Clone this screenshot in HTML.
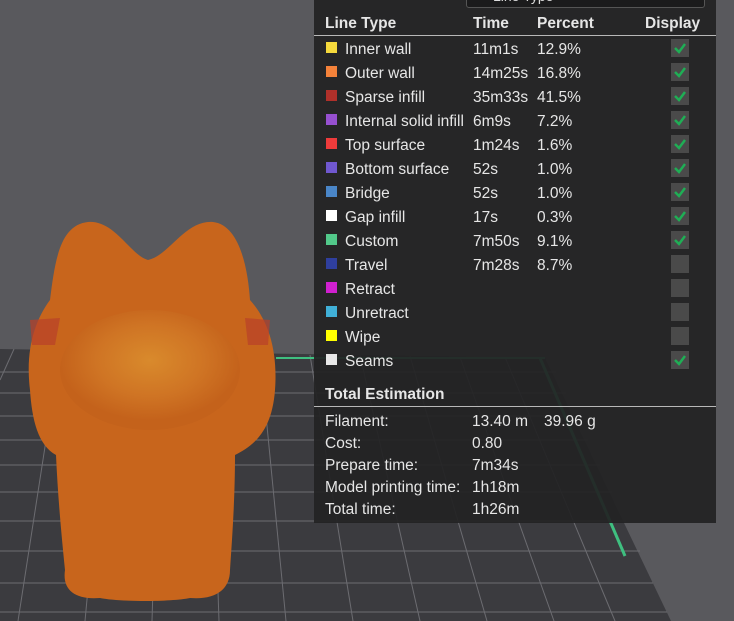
<!DOCTYPE html>
<html><head><meta charset="utf-8"><style>
*{margin:0;padding:0;box-sizing:border-box}
body{width:734px;height:621px;overflow:hidden;background:#59595d;position:relative;font-family:"Liberation Sans",sans-serif}
svg.bg{position:absolute;left:0;top:0}
.panel{position:absolute;left:314px;top:0;width:402px;height:523px;background:rgba(34,34,36,0.93);color:#e6e6e6;font-size:15.5px}
.dd{position:absolute;left:152px;top:-12px;width:239px;height:20px;border:1px solid #555;border-radius:3px;background:#1b1b1c;color:#ddd;font-size:14px;padding-left:26px;line-height:14px}
.t{position:absolute;white-space:nowrap;margin-top:2px}
.b{font-weight:bold}
.hl{position:absolute;left:0;width:402px;height:1px;background:#b8b8b8}
.sw{position:absolute;width:11px;height:11px}
.cb{position:absolute;left:357px;width:18px;height:18px;background:#4a4a4a}
.cb svg{position:absolute;left:2px;top:3px}
</style></head><body>
<svg class="bg" width="734" height="621">
<polygon points="0,349 545,358 671,621 0,621" fill="#3b3b3f"/>
<g stroke="#6c6c71" stroke-width="1" fill="none">
<line x1="0" y1="372" x2="556" y2="372"/>
<line x1="0" y1="393" x2="566" y2="393"/>
<line x1="0" y1="416" x2="577" y2="416"/>
<line x1="0" y1="440" x2="588" y2="440"/>
<line x1="0" y1="465" x2="600" y2="465"/>
<line x1="0" y1="492" x2="612" y2="492"/>
<line x1="0" y1="521" x2="626" y2="521"/>
<line x1="0" y1="551" x2="640" y2="551"/>
<line x1="0" y1="583" x2="653" y2="583"/>
<line x1="0" y1="612" x2="667" y2="612"/>
<line x1="14" y1="349" x2="0" y2="380"/>
<line x1="60" y1="350" x2="18" y2="621"/>
<line x1="110" y1="351" x2="85" y2="621"/>
<line x1="160" y1="352" x2="152" y2="621"/>
<line x1="210" y1="353" x2="219" y2="621"/>
<line x1="260" y1="354" x2="286" y2="621"/>
<line x1="310" y1="355" x2="353" y2="621"/>
<line x1="360" y1="355" x2="420" y2="621"/>
<line x1="410" y1="356" x2="487" y2="621"/>
<line x1="460" y1="357" x2="554" y2="621"/>
<line x1="505" y1="357" x2="615" y2="621"/>
</g>
<line x1="276" y1="358" x2="545" y2="358" stroke="#3fbf80" stroke-width="2"/>
<line x1="540" y1="358" x2="625" y2="556" stroke="#3fbf80" stroke-width="3"/>
<defs><radialGradient id="f" cx="0.5" cy="0.42" r="0.5"><stop offset="0" stop-color="#d98a2c"/><stop offset="0.6" stop-color="#cf7424"/><stop offset="1" stop-color="#c4621b"/></radialGradient></defs>
<path d="M30 390 C25 350 35 320 50 300 C55 260 60 225 88 222 C115 220 130 255 148 260 C170 255 185 220 213 222 C240 225 248 270 250 300 C268 320 278 350 275 390 C272 430 255 445 235 455 C235 500 232 540 230 570 C230 590 215 600 190 598 C170 602 120 602 100 598 C75 600 62 590 65 570 C62 540 58 500 56 455 C38 445 32 420 30 390 Z" fill="#c8651c"/>
<ellipse cx="150" cy="370" rx="90" ry="60" fill="url(#f)"/>
<path d="M30 320 L60 318 L55 345 L32 345 Z" fill="#b8402a" opacity="0.7"/>
<path d="M245 318 L270 320 L268 345 L248 345 Z" fill="#b8402a" opacity="0.7"/>
</svg>
<div class="panel">
<div class="dd">Line Type</div>
<div class="t b" style="left:11px;top:13px">Line Type</div>
<div class="t b" style="left:159px;top:13px">Time</div>
<div class="t b" style="left:223px;top:13px">Percent</div>
<div class="t b" style="left:331px;top:13px">Display</div>
<div class="hl" style="top:35px"></div>

<div class="sw" style="left:12px;top:42px;background:#f5d93c"></div><div class="t" style="left:31px;top:39px">Inner wall</div><div class="t" style="left:159px;top:39px">11m1s</div><div class="t" style="left:223px;top:39px">12.9%</div><div class="cb" style="top:39px"><svg width="14" height="12"><path d="M2 6 L6 10 L12 2" stroke="#1fae55" stroke-width="2.5" fill="none"/></svg></div>
<div class="sw" style="left:12px;top:66px;background:#f4823a"></div><div class="t" style="left:31px;top:63px">Outer wall</div><div class="t" style="left:159px;top:63px">14m25s</div><div class="t" style="left:223px;top:63px">16.8%</div><div class="cb" style="top:63px"><svg width="14" height="12"><path d="M2 6 L6 10 L12 2" stroke="#1fae55" stroke-width="2.5" fill="none"/></svg></div>
<div class="sw" style="left:12px;top:90px;background:#b0302a"></div><div class="t" style="left:31px;top:87px">Sparse infill</div><div class="t" style="left:159px;top:87px">35m33s</div><div class="t" style="left:223px;top:87px">41.5%</div><div class="cb" style="top:87px"><svg width="14" height="12"><path d="M2 6 L6 10 L12 2" stroke="#1fae55" stroke-width="2.5" fill="none"/></svg></div>
<div class="sw" style="left:12px;top:114px;background:#9750d0"></div><div class="t" style="left:31px;top:111px">Internal solid infill</div><div class="t" style="left:159px;top:111px">6m9s</div><div class="t" style="left:223px;top:111px">7.2%</div><div class="cb" style="top:111px"><svg width="14" height="12"><path d="M2 6 L6 10 L12 2" stroke="#1fae55" stroke-width="2.5" fill="none"/></svg></div>
<div class="sw" style="left:12px;top:138px;background:#ee3b3b"></div><div class="t" style="left:31px;top:135px">Top surface</div><div class="t" style="left:159px;top:135px">1m24s</div><div class="t" style="left:223px;top:135px">1.6%</div><div class="cb" style="top:135px"><svg width="14" height="12"><path d="M2 6 L6 10 L12 2" stroke="#1fae55" stroke-width="2.5" fill="none"/></svg></div>
<div class="sw" style="left:12px;top:162px;background:#7058d0"></div><div class="t" style="left:31px;top:159px">Bottom surface</div><div class="t" style="left:159px;top:159px">52s</div><div class="t" style="left:223px;top:159px">1.0%</div><div class="cb" style="top:159px"><svg width="14" height="12"><path d="M2 6 L6 10 L12 2" stroke="#1fae55" stroke-width="2.5" fill="none"/></svg></div>
<div class="sw" style="left:12px;top:186px;background:#4a86c8"></div><div class="t" style="left:31px;top:183px">Bridge</div><div class="t" style="left:159px;top:183px">52s</div><div class="t" style="left:223px;top:183px">1.0%</div><div class="cb" style="top:183px"><svg width="14" height="12"><path d="M2 6 L6 10 L12 2" stroke="#1fae55" stroke-width="2.5" fill="none"/></svg></div>
<div class="sw" style="left:12px;top:210px;background:#ffffff"></div><div class="t" style="left:31px;top:207px">Gap infill</div><div class="t" style="left:159px;top:207px">17s</div><div class="t" style="left:223px;top:207px">0.3%</div><div class="cb" style="top:207px"><svg width="14" height="12"><path d="M2 6 L6 10 L12 2" stroke="#1fae55" stroke-width="2.5" fill="none"/></svg></div>
<div class="sw" style="left:12px;top:234px;background:#52c98a"></div><div class="t" style="left:31px;top:231px">Custom</div><div class="t" style="left:159px;top:231px">7m50s</div><div class="t" style="left:223px;top:231px">9.1%</div><div class="cb" style="top:231px"><svg width="14" height="12"><path d="M2 6 L6 10 L12 2" stroke="#1fae55" stroke-width="2.5" fill="none"/></svg></div>
<div class="sw" style="left:12px;top:258px;background:#2f3f9e"></div><div class="t" style="left:31px;top:255px">Travel</div><div class="t" style="left:159px;top:255px">7m28s</div><div class="t" style="left:223px;top:255px">8.7%</div><div class="cb" style="top:255px"></div>
<div class="sw" style="left:12px;top:282px;background:#d020d0"></div><div class="t" style="left:31px;top:279px">Retract</div><div class="cb" style="top:279px"></div>
<div class="sw" style="left:12px;top:306px;background:#40b0d8"></div><div class="t" style="left:31px;top:303px">Unretract</div><div class="cb" style="top:303px"></div>
<div class="sw" style="left:12px;top:330px;background:#ffff00"></div><div class="t" style="left:31px;top:327px">Wipe</div><div class="cb" style="top:327px"></div>
<div class="sw" style="left:12px;top:354px;background:#e8e8e8"></div><div class="t" style="left:31px;top:351px">Seams</div><div class="cb" style="top:351px"><svg width="14" height="12"><path d="M2 6 L6 10 L12 2" stroke="#1fae55" stroke-width="2.5" fill="none"/></svg></div>

<div class="t b" style="left:11px;top:384px">Total Estimation</div>
<div class="hl" style="top:406px"></div>
<div class="t" style="left:11px;top:411px">Filament:</div><div class="t" style="left:158px;top:411px">13.40 m</div><div class="t" style="left:230px;top:411px">39.96 g</div>
<div class="t" style="left:11px;top:433px">Cost:</div><div class="t" style="left:158px;top:433px">0.80</div>
<div class="t" style="left:11px;top:455px">Prepare time:</div><div class="t" style="left:158px;top:455px">7m34s</div>
<div class="t" style="left:11px;top:477px">Model printing time:</div><div class="t" style="left:158px;top:477px">1h18m</div>
<div class="t" style="left:11px;top:499px">Total time:</div><div class="t" style="left:158px;top:499px">1h26m</div>
</div>
</body></html>
